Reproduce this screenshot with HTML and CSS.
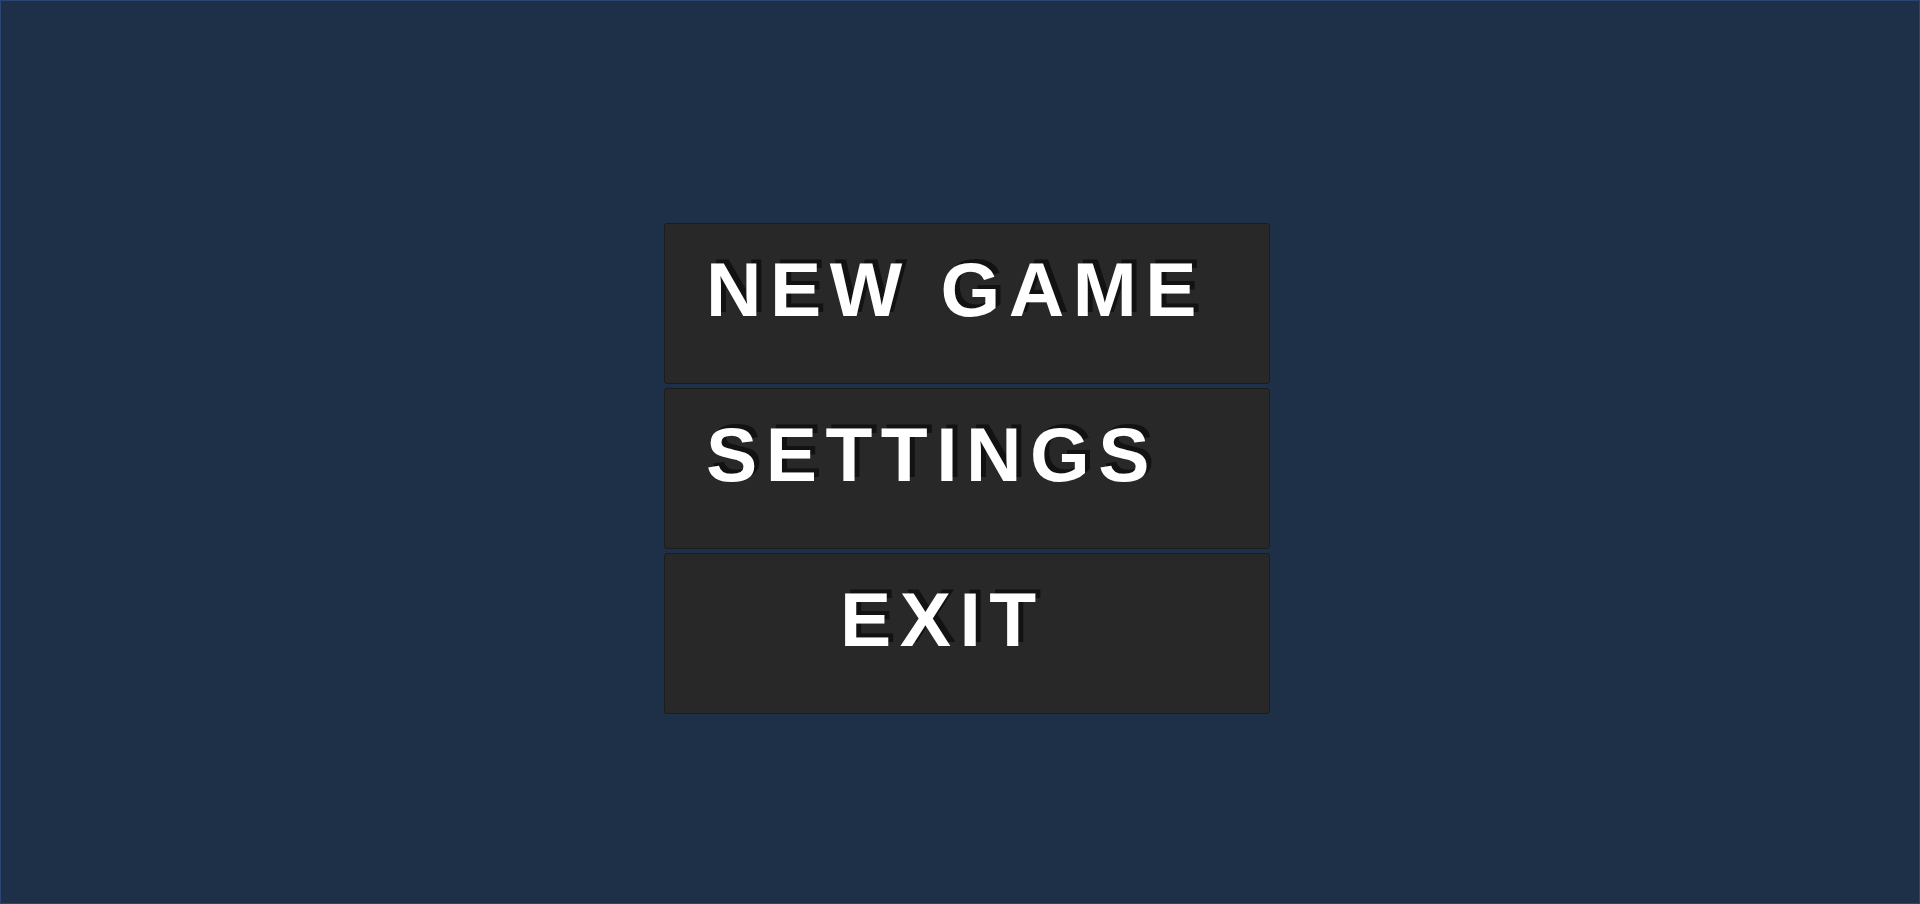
FILE: index.html
```html
<!DOCTYPE html>
<html lang="en">
<head>
<meta charset="utf-8">
<title>Main Menu</title>
<link rel="stylesheet" href="styles.css">
</head>
<body>
<div class="screen">
  <nav class="menu">
    <button class="menu-btn" type="button"><span class="label">NEW GAME</span></button>
    <button class="menu-btn" type="button"><span class="label">SETTINGS</span></button>
    <button class="menu-btn menu-btn--exit" type="button"><span class="label">EXIT</span></button>
  </nav>
</div>
</body>
</html>
```

FILE: styles.css
```css
html, body {
  margin: 0;
  padding: 0;
  height: 100%;
}
body {
  background: #1e2f48;
  font-family: "Liberation Sans", Arial, sans-serif;
}
.screen {
  box-sizing: border-box;
  height: 904px;
  border: 1px solid #2b4673;
  padding-top: 222px;
  padding-left: 663px;
}
.menu {
  display: flex;
  flex-direction: column;
  gap: 4px;
  width: 606px;
}
.menu-btn {
  box-sizing: border-box;
  height: 161px;
  margin: 0;
  padding: 21px 0 0 41px;
  background: #282828;
  border: 1px solid #1c1c1c;
  border-radius: 3px;
  text-align: left;
  display: flex;
  align-items: flex-start;
  cursor: pointer;
  font-family: "Liberation Sans", Arial, sans-serif;
}
.menu-btn--exit {
  padding-left: 175px;
}
.label {
  font-size: 76.8px;
  font-weight: 700;
  line-height: normal;
  letter-spacing: 8.5px;
  color: #ffffff;
  text-shadow: 5px -4px 0 #121212;
  white-space: nowrap;
}
```
